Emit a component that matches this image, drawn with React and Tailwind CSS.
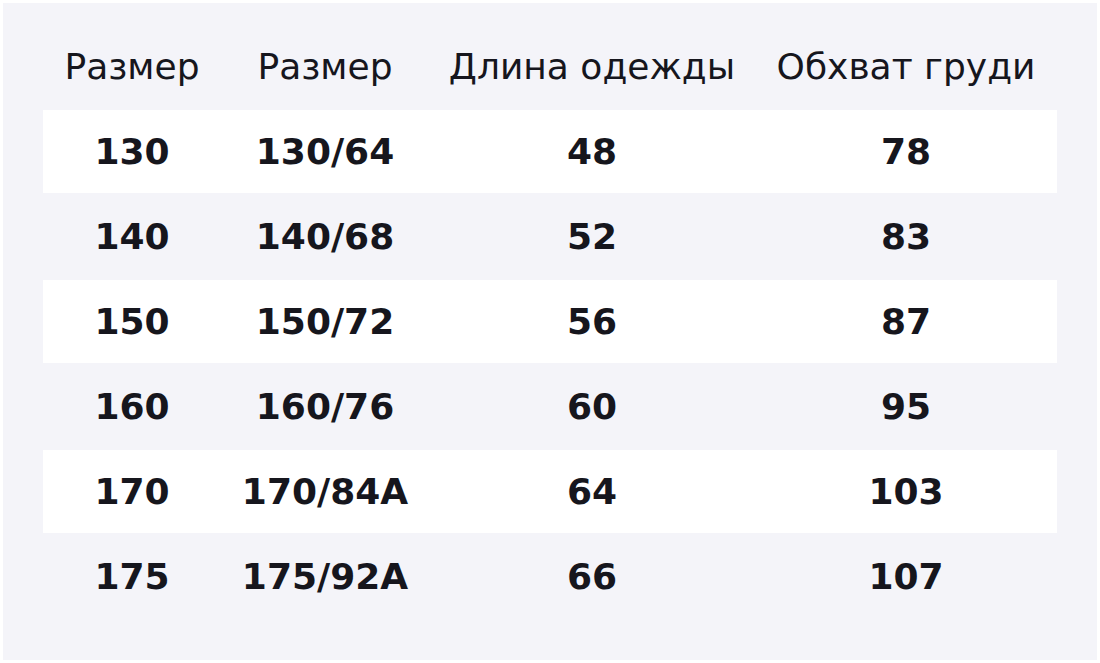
import React from "react";

const rows = [
  ["130", "130/64", "48", "78"],
  ["140", "140/68", "52", "83"],
  ["150", "150/72", "56", "87"],
  ["160", "160/76", "60", "95"],
  ["170", "170/84A", "64", "103"],
  ["175", "175/92A", "66", "107"],
];

const headers = ["Размер", "Размер", "Длина одежды", "Обхват груди"];

export default function App() {
  return (
    <div className="w-[1100px] h-[663px] bg-white p-[3px] font-['DejaVu_Sans',sans-serif] text-[#16161d]">
      <div className="w-full h-full bg-[#f4f4f9] px-10 pt-10">
        <div className="grid grid-cols-[178px_208px_326px_302px]">
          {headers.map((h, i) => (
            <div key={i} className="h-[67px] pb-5 flex items-center justify-center text-[36px] leading-none">
              {h}
            </div>
          ))}
        </div>
        {rows.map((r, i) => (
          <div
            key={i}
            className={`grid grid-cols-[178px_208px_326px_302px] ${i % 2 === 0 ? "h-[83px] bg-white" : "h-[87px]"}`}
          >
            {r.map((c, j) => (
              <div key={j} className="flex items-center justify-center text-[36px] font-bold leading-none">
                {c}
              </div>
            ))}
          </div>
        ))}
      </div>
    </div>
  );
}
